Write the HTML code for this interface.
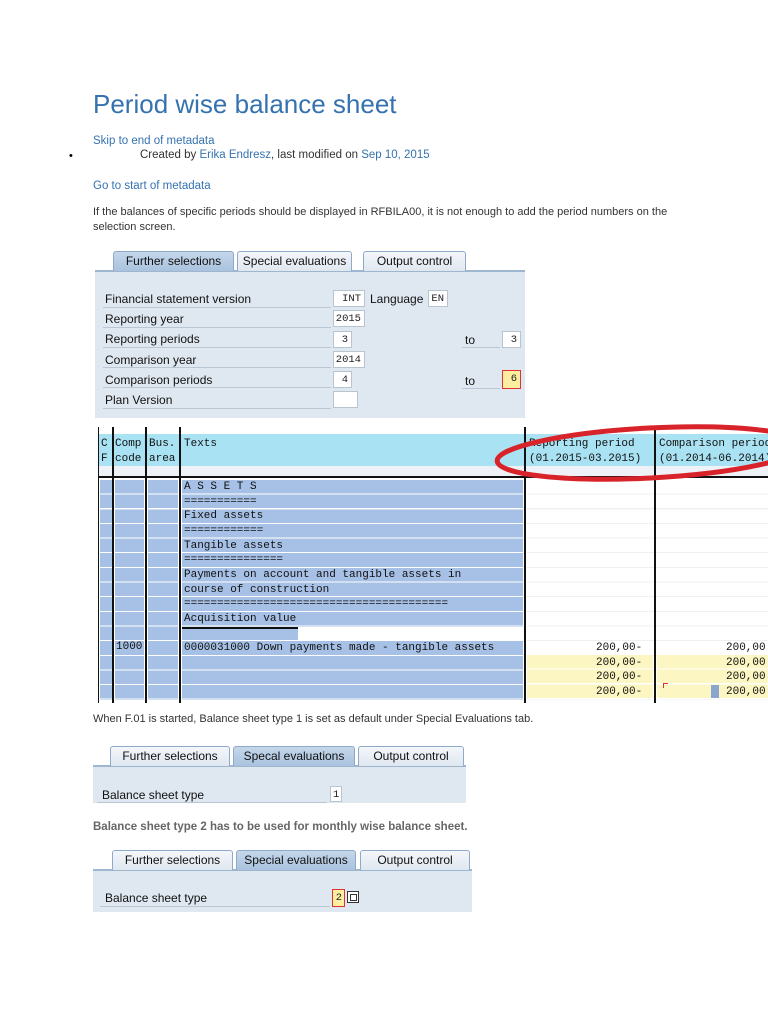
<!DOCTYPE html>
<html><head><meta charset="utf-8"><style>
*{margin:0;padding:0;box-sizing:border-box}
body{width:768px;height:1024px;background:#fff;position:relative;font-family:"Liberation Sans",Arial,sans-serif;overflow:hidden}
.a{position:absolute;white-space:nowrap}
.lk{color:#3572b0}
.t{font-size:11px;color:#333}
.sap{font-family:"Liberation Sans",sans-serif;font-size:12px;color:#111}
.mono{font-family:"Liberation Mono",monospace;font-size:11px;color:#111}
.tab{position:absolute;height:20px;border:1px solid #8fa9c8;border-bottom:none;border-radius:3px 3px 0 0;background:linear-gradient(#f4f7fb,#dfe7f0);font-family:"Liberation Sans",sans-serif;font-size:12px;color:#111;text-align:center;line-height:19px}
.tab.on{background:linear-gradient(#c5d7ea,#a9c2de)}
.box{position:absolute;height:17px;background:#fff;border:1px solid #b8c4d0;font-family:"Liberation Mono",monospace;font-size:10.5px;line-height:16px;text-align:right;padding-right:3px;color:#222}
.ln{position:absolute;height:1px;background:#b9c6d3}
</style></head><body>

<div class="a lk" style="left:93px;top:89px;font-size:26px">Period wise balance sheet</div>
<div class="a lk" style="left:93px;top:135px;font-size:11.5px">Skip to end of metadata</div>
<div class="a" style="left:69px;top:150px;font-size:11px">•</div>
<div class="a t" style="left:140px;top:149px;font-size:11.5px">Created by <span class="lk">Erika Endresz</span>, last modified on <span class="lk">Sep 10, 2015</span></div>
<div class="a lk" style="left:93px;top:180px;font-size:11.5px">Go to start of metadata</div>
<div class="a t" style="left:93px;top:206px">If the balances of specific periods should be displayed in RFBILA00, it is not enough to add the period numbers on the</div>
<div class="a t" style="left:93px;top:221px">selection screen.</div>

<!-- screenshot 1 -->
<div class="a" style="left:95px;top:270px;width:430px;height:148px;background:#dfe8f1;border-top:2px solid #9fb6cf"></div>
<div class="tab on" style="left:113px;top:251px;width:121px">Further selections</div>
<div class="tab" style="left:237px;top:251px;width:115px">Special evaluations</div>
<div class="tab" style="left:363px;top:251px;width:103px">Output control</div>
<div class="a sap" style="left:105px;top:292px">Financial statement version</div>
<div class="a sap" style="left:105px;top:312px">Reporting year</div>
<div class="a sap" style="left:105px;top:332px">Reporting periods</div>
<div class="a sap" style="left:105px;top:353px">Comparison year</div>
<div class="a sap" style="left:105px;top:373px">Comparison periods</div>
<div class="a sap" style="left:105px;top:393px">Plan Version</div>
<div class="ln" style="left:103px;top:307px;width:228px"></div>
<div class="ln" style="left:103px;top:327px;width:228px"></div>
<div class="ln" style="left:103px;top:347px;width:228px"></div>
<div class="ln" style="left:103px;top:367px;width:228px"></div>
<div class="ln" style="left:103px;top:387px;width:228px"></div>
<div class="ln" style="left:103px;top:408px;width:228px"></div>
<div class="ln" style="left:462px;top:347px;width:38px"></div>
<div class="ln" style="left:462px;top:388px;width:38px"></div>
<div class="box" style="left:333px;top:290px;width:32px">INT</div>
<div class="a sap" style="left:370px;top:292px">Language</div>
<div class="box" style="left:428px;top:290px;width:20px">EN</div>
<div class="box" style="left:333px;top:310px;width:32px">2015</div>
<div class="box" style="left:333px;top:331px;width:19px">3</div>
<div class="box" style="left:333px;top:351px;width:32px">2014</div>
<div class="box" style="left:333px;top:371px;width:19px">4</div>
<div class="box" style="left:333px;top:391px;width:25px"></div>
<div class="a sap" style="left:465px;top:333px">to</div>
<div class="a sap" style="left:465px;top:374px">to</div>
<div class="box" style="left:502px;top:331px;width:19px">3</div>
<div class="box" style="left:502px;top:370px;width:19px;height:19px;background:#fbeea0;border:1px solid #d33">6</div>

<!-- table -->
<div class="a" style="left:98px;top:434px;width:670px;height:32px;background:#a9e2f3"></div>
<div class="a" style="left:98px;top:466px;width:670px;height:11px;background:#eef2f6"></div>
<div class="a" style="left:98px;top:476px;width:670px;height:2px;background:#111"></div>
<div class="a mono" style="left:101px;top:437px;line-height:15px">C<br>F</div>
<div class="a mono" style="left:115px;top:437px;line-height:15px">Comp<br>code</div>
<div class="a mono" style="left:149px;top:437px;line-height:15px">Bus.<br>area</div>
<div class="a mono" style="left:184px;top:437px;line-height:15px">Texts</div>
<div class="a mono" style="left:529px;top:437px;line-height:15px">Reporting period<br>(01.2015-03.2015)</div>
<div class="a mono" style="left:659px;top:437px;line-height:15px">Comparison period<br>(01.2014-06.2014)</div>

<div class="a" style="left:100px;top:480px;width:12px;height:220px;background:repeating-linear-gradient(#a7c1e6 0 13.6px,#fff 13.6px 14.65px)"></div>
<div class="a" style="left:115px;top:480px;width:29px;height:220px;background:repeating-linear-gradient(#a7c1e6 0 13.6px,#fff 13.6px 14.65px)"></div>
<div class="a" style="left:148px;top:480px;width:30px;height:220px;background:repeating-linear-gradient(#a7c1e6 0 13.6px,#fff 13.6px 14.65px)"></div>
<div class="a" style="left:182px;top:480px;width:341px;height:220px;background:repeating-linear-gradient(#a7c1e6 0 13.6px,#fff 13.6px 14.65px)"></div>
<div class="a" style="left:527px;top:480px;width:241px;height:220px;background:repeating-linear-gradient(#fff 0 13.6px,#eef1f4 13.6px 14.65px)"></div>
<div class="a" style="left:527px;top:655px;width:126px;height:44px;background:repeating-linear-gradient(#fcf6c2 0 13.6px,#fff 13.6px 14.65px)"></div>
<div class="a" style="left:657px;top:655px;width:111px;height:44px;background:repeating-linear-gradient(#fcf6c2 0 13.6px,#fff 13.6px 14.65px)"></div>
<div class="a" style="left:182px;top:627px;width:116px;height:2px;background:#111"></div>
<div class="a" style="left:298px;top:627px;width:225px;height:14px;background:#fff"></div>
<div class="a" style="left:98px;top:427px;width:1px;height:276px;background:#111"></div>
<div class="a" style="left:112px;top:427px;width:2px;height:276px;background:#111"></div>
<div class="a" style="left:145px;top:427px;width:2px;height:276px;background:#111"></div>
<div class="a" style="left:179px;top:427px;width:2px;height:276px;background:#111"></div>
<div class="a" style="left:524px;top:427px;width:2px;height:276px;background:#111"></div>
<div class="a" style="left:654px;top:427px;width:2px;height:276px;background:#111"></div>
<div class="a mono" style="left:184px;top:480px;line-height:14.65px">A S S E T S<br>===========<br>Fixed assets<br>============<br>Tangible assets<br>===============<br>Payments on account and tangible assets in<br>course of construction<br>========================================<br>Acquisition value<br><br>0000031000 Down payments made - tangible assets</div>
<div class="a mono" style="left:116px;top:641px">1000</div>
<div class="a mono" style="left:596px;top:641px;line-height:14.65px">200,00-<br>200,00-<br>200,00-<br>200,00-</div>
<div class="a mono" style="left:726px;top:641px;line-height:14.65px">200,00<br>200,00<br>200,00<br>200,00</div>
<div class="a" style="left:711px;top:685px;width:8px;height:13px;background:#8aa6cc"></div>
<div class="a" style="left:663px;top:683px;width:5px;height:5px;border-left:1px solid #d33;border-top:1px solid #d33"></div>
<svg class="a" style="left:480px;top:420px" width="300" height="70"><ellipse cx="170" cy="33" rx="153" ry="25" fill="none" stroke="#d8232a" stroke-width="5" transform="rotate(-3 170 33)"/></svg>

<div class="a t" style="left:93px;top:713px">When F.01 is started, Balance sheet type 1 is set as default under Special Evaluations tab.</div>

<!-- screenshot 2 -->
<div class="a" style="left:93px;top:765px;width:373px;height:38px;background:#dfe8f1;border-top:2px solid #9fb6cf"></div>
<div class="tab" style="left:110px;top:746px;width:120px">Further selections</div>
<div class="tab on" style="left:233px;top:746px;width:122px">Specal evaluations</div>
<div class="tab" style="left:358px;top:746px;width:106px">Output control</div>
<div class="a sap" style="left:102px;top:788px">Balance sheet type</div>
<div class="ln" style="left:97px;top:802px;width:230px"></div>
<div class="box" style="left:330px;top:786px;width:12px;height:16px;padding:0 2px">1</div>

<div class="a" style="left:93px;top:821px;font-size:11.5px;font-weight:bold;color:#666">Balance sheet type 2 has to be used for monthly wise balance sheet.</div>

<!-- screenshot 3 -->
<div class="a" style="left:93px;top:869px;width:379px;height:43px;background:#dfe8f1;border-top:2px solid #9fb6cf"></div>
<div class="tab" style="left:112px;top:850px;width:121px">Further selections</div>
<div class="tab on" style="left:236px;top:850px;width:120px">Special evaluations</div>
<div class="tab" style="left:360px;top:850px;width:110px">Output control</div>
<div class="a sap" style="left:105px;top:891px">Balance sheet type</div>
<div class="ln" style="left:100px;top:906px;width:230px"></div>
<div class="box" style="left:332px;top:889px;width:13px;height:18px;padding:0 2px;background:#fbeea0;border:1px solid #d33">2</div>
<div class="a" style="left:347px;top:891px;width:12px;height:12px;border:1px solid #333;background:#fff"></div>
<div class="a" style="left:350px;top:894px;width:7px;height:7px;border:1px solid #333;background:#fff"></div>
</body></html>
